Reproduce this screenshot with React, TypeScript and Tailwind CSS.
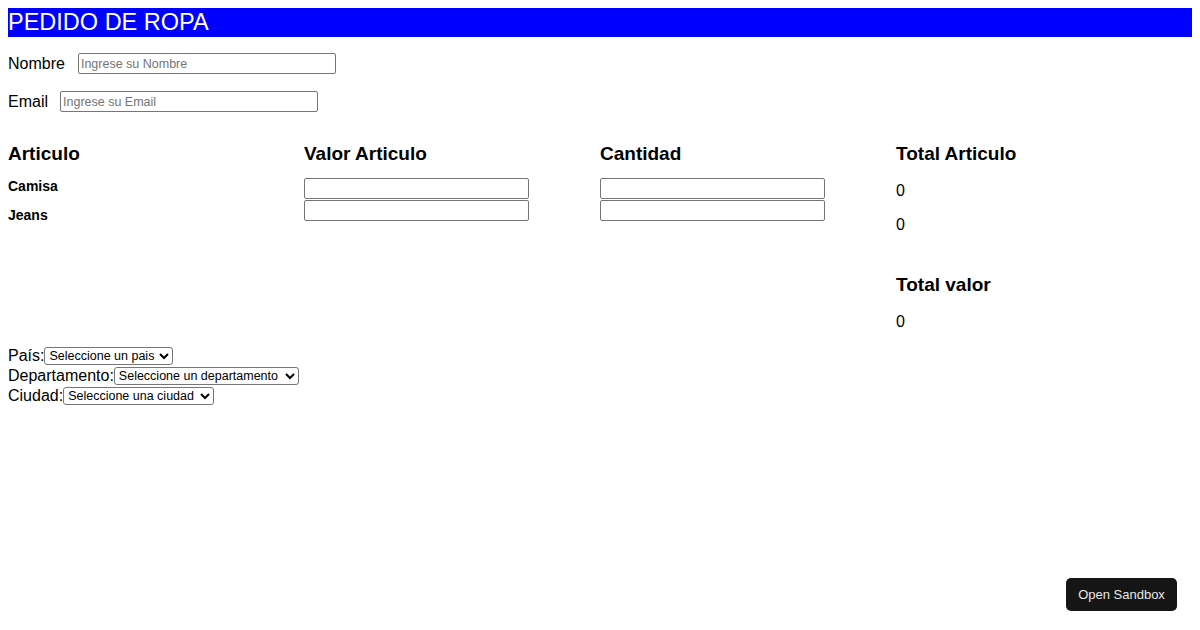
import React from 'react';

const inputCls =
  'h-[21px] border border-[#767676] rounded-[2px] px-[2px] text-[12.5px] text-black placeholder:text-[#757575] bg-white outline-none';
const selectCls = 'h-[18px] border border-[#767676] rounded-[3px] text-[12.5px] text-black bg-white';

const App = () => {
  return (
    <div className="min-h-[630px] bg-white p-2 text-black font-['Liberation_Sans',Arial,sans-serif] text-[16px]">
      {/* Title */}
      <div className="h-[29px] bg-[#0000ff] text-white text-[23.5px] leading-[29px]">PEDIDO DE ROPA</div>

      {/* Cliente */}
      <div className="mt-4 flex items-center h-[21px]">
        <label className="mr-[13px]">Nombre</label>
        <input className={`${inputCls} w-[258px]`} placeholder="Ingrese su Nombre" />
      </div>
      <div className="mt-[17px] flex items-center h-[21px]">
        <label className="mr-[12px]">Email</label>
        <input className={`${inputCls} w-[258px]`} placeholder="Ingrese su Email" />
      </div>

      {/* Articulos */}
      <div className="mt-[30px] grid grid-cols-4">
        <div className="flex flex-col">
          <h3 className="text-[19px] font-bold leading-[23px]">Articulo</h3>
          <span className="mt-[13px] text-[14px] font-bold leading-[16px]">Camisa</span>
          <span className="mt-[13px] text-[14px] font-bold leading-[16px]">Jeans</span>
        </div>
        <div className="flex flex-col">
          <h3 className="text-[19px] font-bold leading-[23px]">Valor Articulo</h3>
          <input className={`${inputCls} w-[225px] mt-[13px]`} />
          <input className={`${inputCls} w-[225px] mt-[1px]`} />
        </div>
        <div className="flex flex-col">
          <h3 className="text-[19px] font-bold leading-[23px]">Cantidad</h3>
          <input className={`${inputCls} w-[225px] mt-[13px]`} />
          <input className={`${inputCls} w-[225px] mt-[1px]`} />
        </div>
        <div className="flex flex-col">
          <h3 className="text-[19px] font-bold leading-[23px]">Total Articulo</h3>
          <p className="mt-[17px] leading-[18px]">0</p>
          <p className="mt-[16px] leading-[18px]">0</p>
          <h3 className="mt-[39px] text-[19px] font-bold leading-[23px]">Total valor</h3>
          <p className="mt-[17px] leading-[18px]">0</p>
        </div>
      </div>

      {/* Ubicacion */}
      <div className="mt-[15px] flex flex-col">
        <div className="flex items-center h-[20px]">
          <label>País:</label>
          <select className={`${selectCls} w-[129px]`}>
            <option>Seleccione un pais</option>
          </select>
        </div>
        <div className="flex items-center h-[20px]">
          <label>Departamento:</label>
          <select className={`${selectCls} w-[185px]`}>
            <option>Seleccione un departamento</option>
          </select>
        </div>
        <div className="flex items-center h-[20px]">
          <label>Ciudad:</label>
          <select className={`${selectCls} w-[151px]`}>
            <option>Seleccione una ciudad</option>
          </select>
        </div>
      </div>

      <button className="fixed right-[23px] bottom-[19px] w-[111px] h-[33px] rounded-[5px] bg-[#151515] text-[#e8e8e8] text-[13px]">
        Open Sandbox
      </button>
    </div>
  );
};

export default App;
